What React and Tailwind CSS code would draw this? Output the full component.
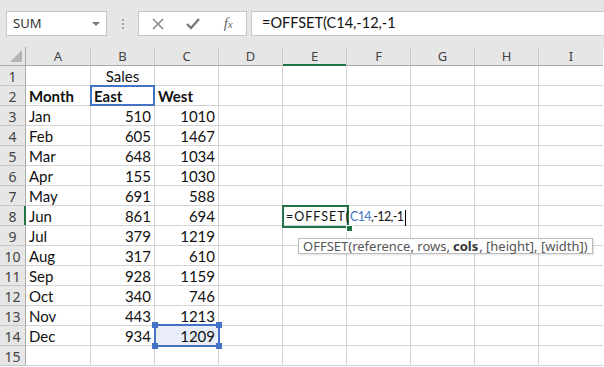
import React from 'react';

const cols = ['A', 'B', 'C', 'D', 'E', 'F', 'G', 'H', 'I'];

const data = [
  ['Jan', 510, 1010],
  ['Feb', 605, 1467],
  ['Mar', 648, 1034],
  ['Apr', 155, 1030],
  ['May', 691, 588],
  ['Jun', 861, 694],
  ['Jul', 379, 1219],
  ['Aug', 317, 610],
  ['Sep', 928, 1159],
  ['Oct', 340, 746],
  ['Nov', 443, 1213],
  ['Dec', 934, 1209],
];

const cellFont = { fontFamily: 'Lato, "Liberation Sans", sans-serif' };

// contenu d'une cellule selon ligne / colonne
const cellContent = (row, col) => {
  if (row === 1 && col === 1) return { text: 'Sales', align: 'center' };
  if (row === 2) {
    if (col === 0) return { text: 'Month', bold: true };
    if (col === 1) return { text: 'East', bold: true };
    if (col === 2) return { text: 'West', bold: true };
  }
  if (row >= 3 && row <= 14 && col <= 2) {
    const d = data[row - 3];
    return { text: String(d[col]), align: col === 0 ? 'left' : 'right' };
  }
  return null;
};

const Corner = () => (
  <div className="relative bg-[#e6e6e6] border-r border-b border-[#ababab]">
    <div className="absolute right-[3px] bottom-[3px] w-0 h-0 border-l-[12px] border-l-transparent border-b-[12px] border-b-[#b4b4b4]" />
  </div>
);

const Cell = ({ row, col }) => {
  const c = cellContent(row, col);
  const isC14 = row === 14 && col === 2;
  const isB2 = row === 2 && col === 1;
  const isE8 = row === 8 && col === 4;
  const isLast = col === 8;
  return (
    <div
      className={`relative border-b border-[#d4d4d4] ${isLast ? 'border-r-0' : 'border-r'} ${isC14 ? 'bg-[#e8edf7]' : 'bg-white'}`}
      style={cellFont}
    >
      {c && (
        <div
          className={`h-full flex items-center pt-[2px] px-[3px] text-[15px] leading-none text-[#111] whitespace-nowrap ${c.bold ? 'font-bold' : ''} ${c.align === 'right' ? 'justify-end' : c.align === 'center' ? 'justify-center' : 'justify-start'}`}
        >
          {c.text}
        </div>
      )}
      {isB2 && <div className="absolute -left-px -top-px w-[65px] h-[21px] border-2 border-[#4472c4]" />}
      {isC14 && (
        <div className="absolute -left-px -top-[2px] w-[66px] h-[23px] border-2 border-[#4472c4] z-10">
          <div className="absolute -left-[4px] -top-[4px] w-[6px] h-[6px] bg-[#4472c4]" />
          <div className="absolute -right-[4px] -top-[4px] w-[6px] h-[6px] bg-[#4472c4]" />
          <div className="absolute -left-[4px] -bottom-[4px] w-[6px] h-[6px] bg-[#4472c4]" />
          <div className="absolute -right-[4px] -bottom-[4px] w-[6px] h-[6px] bg-[#4472c4]" />
        </div>
      )}
      {isE8 && (
        <>
          <div className="absolute -left-px -top-px w-[67px] h-[23px] border-2 border-[#217346] z-10" />
          <div className="absolute left-[63px] top-[19px] w-[5px] h-[5px] bg-[#217346] border border-white z-20 box-content" />
          <div className="absolute left-[3px] top-[2px] z-20">
            <span className="block text-[12.5px] leading-[18px] text-[#111] whitespace-nowrap">
              <span className="tracking-[1px]">=OFFSET(</span>
              <span className="tracking-[-0.6px]">
                <span className="text-[#4472c4]">C14</span>,-12,-1
              </span>
              <span className="inline-block align-middle ml-[2px] w-px h-[16px] bg-black" />
            </span>
          </div>
          <div
            className="absolute left-[15px] top-[32px] h-[16px] px-[4px] flex items-center bg-white border border-[#bcbcbc] text-[13px] leading-none text-[#555] whitespace-nowrap z-30 shadow-[1px_1px_2px_rgba(0,0,0,0.12)]"
            style={{ fontFamily: '"Noto Sans", "Open Sans", sans-serif' }}
          >
            OFFSET(reference, rows, <b className="ml-[3px] mr-px text-[#333]">cols</b>, [height], [width])
          </div>
        </>
      )}
    </div>
  );
};

const App = () => {
  const hdrFont = { fontFamily: '"Noto Sans", "Open Sans", sans-serif' };
  return (
    <div className="w-[604px] h-[367px] overflow-hidden bg-white">
      {/* barre de formule */}
      <div className="h-[47px] bg-[#e6e6e6] flex items-start pt-[11px] pl-[6px]" style={hdrFont}>
        <div className="w-[101px] h-[25px] bg-white border border-[#c6c6c6] flex items-center justify-between pl-[6px] pr-[6px]">
          <span className="text-[13px] text-[#333]">SUM</span>
          <span className="w-0 h-0 border-l-[4px] border-r-[4px] border-t-[4px] border-l-transparent border-r-transparent border-t-[#777]" />
        </div>
        <div className="w-[31px] h-[25px] flex flex-col items-center justify-center gap-[2px]">
          <span className="w-[2px] h-[2px] bg-[#a0a0a0]" />
          <span className="w-[2px] h-[2px] bg-[#a0a0a0]" />
          <span className="w-[2px] h-[2px] bg-[#a0a0a0]" />
        </div>
        <div className="w-[109px] h-[25px] bg-white border border-[#c6c6c6] flex items-center">
          <div className="w-[38px] flex justify-center">
            <svg width="12" height="12" viewBox="0 0 12 12">
              <path d="M1 1 L11 11 M11 1 L1 11" stroke="#7a7a7a" strokeWidth="1.3" fill="none" />
            </svg>
          </div>
          <div className="w-[34px] flex justify-center">
            <svg width="14" height="12" viewBox="0 0 14 12">
              <path d="M1 6 L5 10 L13 1" stroke="#7a7a7a" strokeWidth="2.4" fill="none" />
            </svg>
          </div>
          <div className="w-[36px] flex justify-center">
            <span className="italic text-[#666] text-[15px] leading-none" style={{ fontFamily: '"Liberation Serif", serif' }}>
              f<span className="text-[11px]">x</span>
            </span>
          </div>
        </div>
        <div className="ml-[4px] flex-1 h-[25px] bg-white border border-[#c6c6c6] border-r-0 flex items-center pl-[10px]">
          <span className="text-[14.5px] text-[#111] leading-none" style={cellFont}>=OFFSET(C14,-12,-1</span>
        </div>
      </div>

      {/* grille */}
      <div className="grid grid-cols-[26px_65px_64px_64px_64px_64px_64px_64px_64px_64px] grid-rows-[19px_repeat(15,20px)]">
        <Corner />
        {cols.map((c) => (
          <div
            key={c}
            className={`relative bg-[#e6e6e6] border-b border-[#ababab] flex items-center justify-center pt-px text-[13px] text-[#444] ${c === 'I' ? '' : 'border-r border-r-[#c8c8c8]'}`}
            style={hdrFont}
          >
            {c}
            {c === 'E' && <div className="absolute left-0 right-0 bottom-[-1px] h-[2px] bg-[#217346]" />}
          </div>
        ))}
        {Array.from({ length: 15 }, (_, i) => i + 1).map((row) => (
          <React.Fragment key={row}>
            <div
              className="relative bg-[#e6e6e6] border-r border-r-[#ababab] border-b border-b-[#c8c8c8] flex items-center justify-center pt-px text-[14px] text-[#444]"
              style={hdrFont}
            >
              {row}
              {row === 8 && <div className="absolute right-[-1px] top-0 bottom-0 w-[2px] bg-[#217346]" />}
            </div>
            {cols.map((c, ci) => (
              <Cell key={c} row={row} col={ci} />
            ))}
          </React.Fragment>
        ))}
      </div>
    </div>
  );
};

export default App;
